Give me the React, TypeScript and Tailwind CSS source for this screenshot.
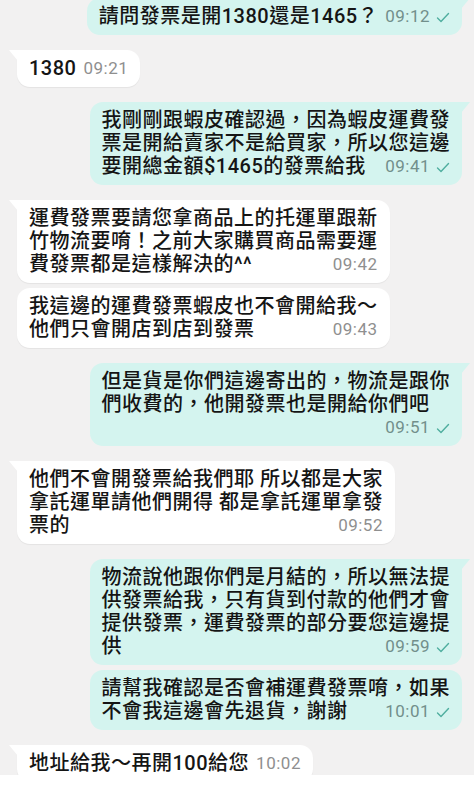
import React from "react";

type Msg = {
  side: "in" | "out";
  lines: string[];
  time: string;
  tail: boolean;
  timeOwnLine?: boolean;
};

const messages: Msg[] = [
  { side: "out", lines: ["請問發票是開1380還是1465？"], time: "09:12", tail: true },
  { side: "in", lines: ["1380"], time: "09:21", tail: true },
  {
    side: "out",
    lines: ["我剛剛跟蝦皮確認過，因為蝦皮運費發", "票是開給賣家不是給買家，所以您這邊", "要開總金額$1465的發票給我"],
    time: "09:41",
    tail: true,
  },
  {
    side: "in",
    lines: ["運費發票要請您拿商品上的托運單跟新", "竹物流要唷！之前大家購買商品需要運", "費發票都是這樣解決的^^"],
    time: "09:42",
    tail: true,
  },
  {
    side: "in",
    lines: ["我這邊的運費發票蝦皮也不會開給我～", "他們只會開店到店到發票"],
    time: "09:43",
    tail: false,
  },
  {
    side: "out",
    lines: ["但是貨是你們這邊寄出的，物流是跟你", "們收費的，他開發票也是開給你們吧"],
    time: "09:51",
    tail: true,
    timeOwnLine: true,
  },
  {
    side: "in",
    lines: ["他們不會開發票給我們耶 所以都是大家", "拿託運單請他們開得 都是拿託運單拿發", "票的"],
    time: "09:52",
    tail: true,
  },
  {
    side: "out",
    lines: [
      "物流說他跟你們是月結的，所以無法提",
      "供發票給我，只有貨到付款的他們才會",
      "提供發票，運費發票的部分要您這邊提",
      "供",
    ],
    time: "09:59",
    tail: true,
  },
  {
    side: "out",
    lines: ["請幫我確認是否會補運費發票唷，如果", "不會我這邊會先退貨，謝謝"],
    time: "10:01",
    tail: false,
  },
  { side: "in", lines: ["地址給我～再開100給您"], time: "10:02", tail: true },
];

function Check() {
  return (
    <svg width="14" height="11" viewBox="0 0 14 11" className="mb-[5px] ml-[6px] shrink-0">
      <polyline points="1.5,6 5,9.5 12.5,1.5" fill="none" stroke="#4fae9f" strokeWidth="1.4" strokeLinecap="round" strokeLinejoin="round" />
    </svg>
  );
}

function Time({ msg }: { msg: Msg }) {
  const out = msg.side === "out";
  return (
    <span className="flex shrink-0 items-end">
      <span className={`text-[17px] leading-[23px] font-normal ${out ? "text-[#728f8b]" : "text-[#8f8f8f]"}`}>{msg.time}</span>
      {out && <Check />}
    </span>
  );
}

function Bubble({ msg, first }: { msg: Msg; first: boolean }) {
  const out = msg.side === "out";
  const gap = first ? "mt-[-2px]" : msg.tail ? "mt-[15px]" : "mt-[5px]";
  const last = msg.lines.length - 1;
  return (
    <div className={`flex ${out ? "justify-end pr-[12px]" : "justify-start pl-[17px]"} ${gap}`}>
      <div
        className={`relative rounded-[13px] px-[12px] pt-[7px] pb-[7px] text-[20px] font-medium leading-[23px] tracking-[0.5px] text-[#151515] ${
          out ? "bg-[#d4f4ef]" : "bg-white shadow-[0_1px_1px_rgba(0,0,0,0.06)]"
        } ${msg.tail ? (out ? "rounded-tr-none" : "rounded-tl-none") : ""}`}
      >
        {msg.tail && (
          <svg
            width="9"
            height="11"
            viewBox="0 0 9 11"
            className={`absolute top-0 ${out ? "right-[-8px]" : "left-[-8px]"}`}
          >
            <polygon points={out ? "0,0 9,0 0,11" : "0,0 9,0 9,11"} fill={out ? "#d4f4ef" : "#ffffff"} />
          </svg>
        )}
        {msg.lines.map((line, i) =>
          i === last && !msg.timeOwnLine ? (
            <div key={i} className="flex items-end justify-between gap-[7px]">
              <span className="whitespace-pre">{line}</span>
              <Time msg={msg} />
            </div>
          ) : (
            <div key={i} className="whitespace-pre">
              {line}
            </div>
          )
        )}
        {msg.timeOwnLine && (
          <div className="flex justify-end">
            <Time msg={msg} />
          </div>
        )}
      </div>
    </div>
  );
}

export default function App() {
  return (
    <main
      className="flex h-[786px] w-[474px] flex-col overflow-hidden bg-white"
      style={{ fontFamily: 'Roboto, "Noto Sans CJK TC", "Noto Sans", sans-serif' }}
    >
      {/* chat area */}
      <section className="flex-1 overflow-hidden bg-[#f2f1f1]">
        {messages.map((m, i) => (
          <Bubble key={i} msg={m} first={i === 0} />
        ))}
      </section>
      {/* bottom strip */}
      <div className="h-[11px] shrink-0 bg-white" />
    </main>
  );
}
